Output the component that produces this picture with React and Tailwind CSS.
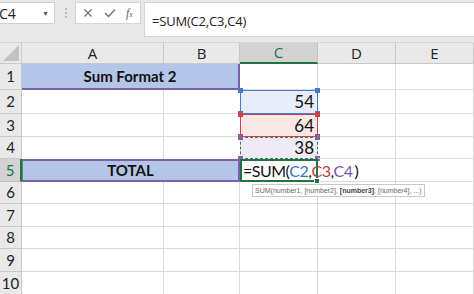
import React from "react";

function RowHead({ n, active }) {
  return (
    <div
      className={`flex items-center justify-center border-b border-r text-[15px] ${
        active
          ? "bg-[#d2d2d2] text-[#217346] border-r-[#217346] border-r-2 border-b-[#bdbdbd]"
          : "bg-[#e9e9e9] text-[#222] border-[#c9c9c9]"
      }`}
    >
      {n}
    </div>
  );
}

function Cell({ children, className = "" }) {
  return (
    <div className={`relative border-b border-r border-[#dadada] ${className}`}>{children}</div>
  );
}

function Handle({ pos, color }) {
  return <div className={`absolute w-[5px] h-[5px] ${color} ${pos}`} />;
}

export default function App() {
  const blank = (k) => <Cell key={k} />;
  return (
    <div
      className="relative w-[474px] h-[294px] overflow-hidden bg-white text-[#111]"
      style={{ fontFamily: "Lato, 'Open Sans', sans-serif" }}
    >
      {/* Toolbar */}
      <div className="h-[43px] bg-[#e8e8e8] flex items-start pt-[2px] border-b border-[#d6d6d6]">
        <div className="-ml-[5px] w-[60px] h-[22px] bg-white border border-[#d0d0d0] flex items-center justify-between pl-[3px] pr-[5px]">
          <span className="text-[14px] text-[#222]" style={{ fontFamily: "'Open Sans', sans-serif" }}>C4</span>
          <span className="text-[7px] text-[#555]">▼</span>
        </div>
        <div className="ml-[10px] mt-[6px] flex flex-col gap-[2px]">
          <div className="w-[2px] h-[2px] bg-[#bdbdbd]" />
          <div className="w-[2px] h-[2px] bg-[#bdbdbd]" />
          <div className="w-[2px] h-[2px] bg-[#bdbdbd]" />
        </div>
        <div className="ml-[8px] w-[66px] h-[22px] bg-white border border-[#d6d6d6] flex items-center justify-around px-[2px] text-[#666]">
          <svg width="10" height="10" viewBox="0 0 10 10"><path d="M1.5 1.5 L8.5 8.5 M8.5 1.5 L1.5 8.5" stroke="#707070" strokeWidth="1.2" /></svg>
          <svg width="12" height="10" viewBox="0 0 12 10"><path d="M1 5 L4.5 8.5 L11 1.5" stroke="#707070" strokeWidth="1.3" fill="none" /></svg>
          <span className="text-[12px] italic text-[#666]" style={{ fontFamily: "'Liberation Serif', serif" }}>f<span className="text-[8px]">x</span></span>
        </div>
        <div className="ml-[3px] flex-1 h-[35px] bg-white border border-[#d6d6d6] -mr-[4px] pl-[7px] pt-[5px]">
          <span className="text-[13px] text-[#222] tracking-[-0.2px]" style={{ fontFamily: "'Open Sans', sans-serif" }}>=SUM(C2,C3,C4)</span>
        </div>
      </div>

      {/* Grid */}
      <div className="grid grid-cols-[22px_142px_76px_78px_78px_78px] grid-rows-[21px_26px_24px_23px_22px_23px_22px_23px_22px_23px_23px]">
        {/* header row */}
        <div className="bg-[#e9e9e9] border-r border-b border-[#c9c9c9] relative">
          <svg className="absolute right-[2px] bottom-[2px]" width="16" height="16" viewBox="0 0 16 16"><path d="M16 0 L16 16 L0 16 Z" fill="#c2c2c2" /></svg>
        </div>
        {["A", "B"].map((c) => (
          <div key={c} className="bg-[#e9e9e9] border-r border-b border-[#c9c9c9] flex items-center justify-center text-[15px] text-[#222]" style={{ fontFamily: "'Open Sans', sans-serif" }}>{c}</div>
        ))}
        <div className="bg-[#d3d3d3] border-r border-[#c0c0c0] border-b-2 border-b-[#217346] flex items-center justify-center text-[15px] text-[#217346]" style={{ fontFamily: "'Open Sans', sans-serif" }}>C</div>
        {["D", "E"].map((c) => (
          <div key={c} className="bg-[#e9e9e9] border-r border-b border-[#c9c9c9] flex items-center justify-center text-[15px] text-[#222]" style={{ fontFamily: "'Open Sans', sans-serif" }}>{c}</div>
        ))}

        {/* Row 1 */}
        <RowHead n="1" />
        <div className="col-span-2 bg-[#b4c6e7] border-b-2 border-r-2 border-[#7b5fa8] flex items-center justify-center text-[15px] font-bold">Sum Format 2</div>
        {blank("c1")}
        {blank("d1")}
        {blank("e1")}

        {/* Row 2 */}
        <RowHead n="2" />
        {blank("a2")}
        <Cell className="border-r-0" />
        <div className="relative bg-[#e8eef9] border-[1.5px] border-[#4a78c8] flex items-center justify-end pr-[3px] text-[17px]">
          54
          <Handle pos="-left-[3px] -top-[3px]" color="bg-[#4a78c8]" />
          <Handle pos="-right-[3px] -top-[3px]" color="bg-[#4a78c8]" />
          <Handle pos="-left-[3px] -bottom-[3px]" color="bg-[#4a78c8]" />
          <Handle pos="-right-[3px] -bottom-[3px]" color="bg-[#4a78c8]" />
        </div>
        {blank("d2")}
        {blank("e2")}

        {/* Row 3 */}
        <RowHead n="3" />
        {blank("a3")}
        <Cell className="border-r-0" />
        <div className="relative bg-[#fbe6e6] border-[1.5px] border-[#c9434b] flex items-center justify-end pr-[3px] text-[17px]">
          64
          <Handle pos="-left-[3px] -top-[3px]" color="bg-[#c9434b]" />
          <Handle pos="-right-[3px] -top-[3px]" color="bg-[#c9434b]" />
          <Handle pos="-left-[3px] -bottom-[3px]" color="bg-[#c9434b]" />
          <Handle pos="-right-[3px] -bottom-[3px]" color="bg-[#c9434b]" />
        </div>
        {blank("d3")}
        {blank("e3")}

        {/* Row 4 */}
        <RowHead n="4" />
        <Cell className="border-b-0" />
        <Cell className="border-r-0 border-b-0" />
        <div className="relative bg-[#eeeaf6] border-[1.5px] border-dashed border-[#3f7a5a] flex items-center justify-end pr-[3px] text-[17px]">
          38
          <Handle pos="-left-[3px] -top-[3px]" color="bg-[#8064a2]" />
          <Handle pos="-right-[3px] -top-[3px]" color="bg-[#8064a2]" />
          <Handle pos="-left-[3px] -bottom-[3px]" color="bg-[#8064a2]" />
          <Handle pos="-right-[3px] -bottom-[3px]" color="bg-[#8064a2]" />
        </div>
        {blank("d4")}
        {blank("e4")}

        {/* Row 5 */}
        <RowHead n="5" active />
        <div className="col-span-2 bg-[#b4c6e7] border-y-2 border-l border-r-2 border-[#7b5fa8] border-l-[#5a8a6a] flex items-center justify-center text-[15px] font-bold">TOTAL</div>
        <div className="relative border-2 border-[#217346] flex items-center pl-[1px] text-[16px] tracking-[-0.5px] whitespace-nowrap z-10 overflow-visible">
          <span>=SUM(</span>
          <span className="text-[#3d6fc4]">C2</span>
          <span>,</span>
          <span className="text-[#c0393f]">C3</span>
          <span>,</span>
          <span className="text-[#7a58a8]">C4</span>
          <span className="inline-block w-[1px] h-[18px] bg-black mx-[1px]" />
          <span>)</span>
          <div className="absolute -right-[4px] -bottom-[4px] w-[6px] h-[6px] bg-[#217346] border border-white" />
        </div>
        {blank("d5")}
        {blank("e5")}

        {[6, 7, 8, 9, 10].map((n) => (
          <React.Fragment key={n}>
            <RowHead n={String(n)} />
            {blank("a" + n)}
            {blank("b" + n)}
            {blank("c" + n)}
            {blank("d" + n)}
            {blank("e" + n)}
          </React.Fragment>
        ))}
      </div>

      {/* Tooltip */}
      <div
        className="absolute left-[252px] top-[184px] h-[13px] px-[2px] bg-white border border-[#c8c8c8] text-[7px] leading-[11px] text-[#6a6a6a] whitespace-nowrap z-20"
        style={{ fontFamily: "'Liberation Sans', Arial, sans-serif" }}
      >
        SUM(number1, [number2], <span className="font-bold text-[#444]">[number3]</span>, [number4], ...)
      </div>
    </div>
  );
}
